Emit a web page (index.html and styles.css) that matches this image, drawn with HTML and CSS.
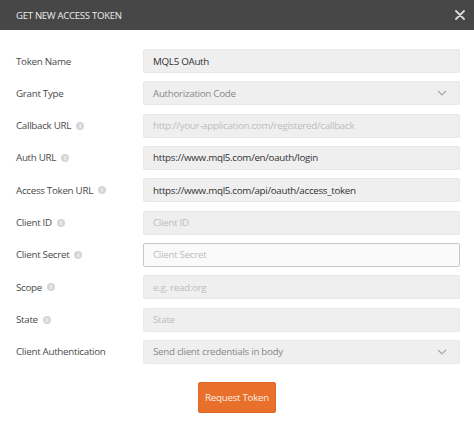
FILE: index.html
```html
<!DOCTYPE html>
<html>
<head>
<meta charset="utf-8">
<link rel="stylesheet" href="styles.css">
</head>
<body>
<div class="modal">
  <div class="header">
    <span class="title">GET NEW ACCESS TOKEN</span>
    <svg class="close" width="10" height="10" viewBox="0 0 10 10"><path d="M1 1 L9 9 M9 1 L1 9" stroke="#d8d8d8" stroke-width="1.8" stroke-linecap="round"/></svg>
  </div>
  <div class="form">
    <div class="label">Token Name</div>
    <div class="field">MQL5 OAuth</div>

    <div class="label">Grant Type</div>
    <div class="field select muted">Authorization Code<svg class="chev" width="10" height="6" viewBox="0 0 10 6"><path d="M1 1 L5 5 L9 1" fill="none" stroke="#aaa" stroke-width="1.2"/></svg></div>

    <div class="label">Callback URL <span class="info">i</span></div>
    <div class="field ph">http://your-application.com/registered/callback</div>

    <div class="label">Auth URL <span class="info">i</span></div>
    <div class="field">https://www.mql5.com/en/oauth/login</div>

    <div class="label">Access Token URL <span class="info">i</span></div>
    <div class="field">https://www.mql5.com/api/oauth/access_token</div>

    <div class="label">Client ID <span class="info">i</span></div>
    <div class="field ph">Client ID</div>

    <div class="label">Client Secret <span class="info">i</span></div>
    <div class="field ph focus">Client Secret</div>

    <div class="label">Scope <span class="info">i</span></div>
    <div class="field ph">e.g. read:org</div>

    <div class="label">State <span class="info">i</span></div>
    <div class="field ph">State</div>

    <div class="label">Client Authentication</div>
    <div class="field select muted">Send client credentials in body<svg class="chev" width="10" height="6" viewBox="0 0 10 6"><path d="M1 1 L5 5 L9 1" fill="none" stroke="#aaa" stroke-width="1.2"/></svg></div>
  </div>
  <div class="actions">
    <button class="btn">Request Token</button>
  </div>
</div>
</body>
</html>
```
FILE: styles.css
```css
html, body {
  margin: 0;
  padding: 0;
  background: #fff;
}
body {
  font-family: "Open Sans", "Liberation Sans", sans-serif;
  font-size: 9.8px;
  letter-spacing: -0.3px;
  color: #4a4a4a;
}
.modal {
  width: 474px;
  height: 436px;
  background: #fff;
}
.header {
  height: 30px;
  background: #474747;
  display: flex;
  align-items: center;
  justify-content: space-between;
  padding: 0 9px 0 16px;
  box-sizing: border-box;
}
.title {
  color: #ececec;
  font-size: 9.6px;
  letter-spacing: -0.3px;
}
.close {
  display: block;
  margin-top: -1px;
}
.form {
  display: grid;
  grid-template-columns: 127px 317px;
  row-gap: 8.33px;
  padding: 19px 0 0 16px;
  align-items: center;
}
.label {
  color: #4a4a4a;
  display: flex;
  align-items: center;
}
.info {
  display: inline-flex;
  align-items: center;
  justify-content: center;
  width: 8px;
  height: 8px;
  border-radius: 50%;
  background: #d6d6d6;
  color: #fff;
  font-size: 6px;
  font-weight: bold;
  letter-spacing: 0;
  margin-left: 5px;
  line-height: 1;
}
.field {
  height: 24px;
  box-sizing: border-box;
  background: #efefef;
  border: 1px solid #e8e8e8;
  border-radius: 2px;
  padding: 0 9px;
  display: flex;
  align-items: center;
  color: #333;
  white-space: nowrap;
  overflow: hidden;
}
.field.ph {
  color: #bdbdbd;
}
.field.muted {
  color: #888;
}
.field.focus {
  background: #fafafa;
  border-color: #c8c8c8;
}
.select {
  justify-content: space-between;
}
.chev {
  display: block;
  margin-right: 3px;
}
.actions {
  display: flex;
  justify-content: center;
  padding-top: 18px;
}
.btn {
  width: 78px;
  height: 31px;
  background: #e8702a;
  border: 1px solid #e06a24;
  border-radius: 2px;
  color: #fbeee4;
  font-family: "Open Sans", "Liberation Sans", sans-serif;
  font-size: 9.8px;
  letter-spacing: -0.3px;
  white-space: nowrap;
  padding: 0;
}
```
